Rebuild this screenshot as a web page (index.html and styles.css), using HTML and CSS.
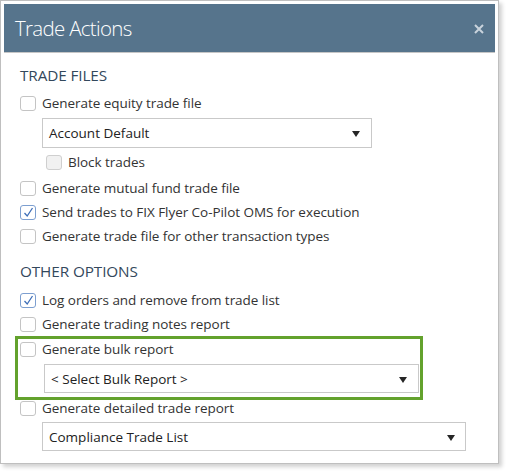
FILE: index.html
```html
<!DOCTYPE html>
<html>
<head>
<meta charset="utf-8">
<link rel="stylesheet" href="styles.css">
</head>
<body>
<div class="dialog">
  <div class="header">
    <span class="title">Trade Actions</span>
    <svg class="close" width="10" height="10" viewBox="0 0 10 10"><path d="M1 1 L9 9 M9 1 L1 9" stroke="#c9d3dc" stroke-width="2" fill="none"/></svg>
  </div>
  <div class="body">
    <div class="heading h1">TRADE FILES</div>
    <label class="row r-equity"><span class="cb"></span>Generate equity trade file</label>
    <div class="select s-account"><span>Account Default</span><i class="arrow"></i></div>
    <label class="row sub r-block"><span class="cb disabled"></span>Block trades</label>
    <label class="row r-mutual"><span class="cb"></span>Generate mutual fund trade file</label>
    <label class="row"><span class="cb checked"><svg width="13" height="13" viewBox="0 0 13 13"><path d="M2.5 7 L5.2 10 L10.5 2" stroke="#3f6fb8" stroke-width="1.3" fill="none"/></svg></span>Send trades to FIX Flyer Co-Pilot OMS for execution</label>
    <label class="row"><span class="cb"></span>Generate trade file for other transaction types</label>

    <div class="heading h2">OTHER OPTIONS</div>
    <label class="row r-log"><span class="cb checked"><svg width="13" height="13" viewBox="0 0 13 13"><path d="M2.5 7 L5.2 10 L10.5 2" stroke="#3f6fb8" stroke-width="1.3" fill="none"/></svg></span>Log orders and remove from trade list</label>
    <label class="row r-notes"><span class="cb"></span>Generate trading notes report</label>
    <div class="highlight">
      <label class="row r-bulk"><span class="cb"></span>Generate bulk report</label>
      <div class="select s-bulk"><span>&lt; Select Bulk Report &gt;</span><i class="arrow"></i></div>
    </div>
    <label class="row r-detail"><span class="cb"></span>Generate detailed trade report</label>
    <div class="select s-compliance"><span>Compliance Trade List</span><i class="arrow"></i></div>
  </div>
</div>
</body>
</html>
```

FILE: styles.css
```css
* { box-sizing: border-box; }
html, body { margin: 0; padding: 0; background: #ffffff; }
body {
  font-family: "Open Sans", "Noto Sans", "Liberation Sans", sans-serif;
  color: #333333;
  width: 508px;
  height: 473px;
  overflow: hidden;
}
.dialog {
  width: 499px;
  height: 464px;
  border: 1px solid #bfbfbf;
  padding: 3px;
  background: #fff;
  box-shadow: 3px 3px 4px rgba(0,0,0,0.18);
}
.header {
  height: 49px;
  background: #56748c;
  border-bottom: 1px solid #c6c6c6;
  display: flex;
  align-items: center;
  justify-content: space-between;
  padding: 0 11px 0 11px;
}
.title {
  color: #ffffff;
  font-size: 20.5px;
  font-weight: 300;
  letter-spacing: -0.7px;
  margin-top: -1px;
}
.close { margin-top: 2px; }
.body {
  padding: 12px 0 0 16px;
  display: flex;
  flex-direction: column;
  align-items: flex-start;
}
.heading {
  font-size: 15.3px;
  line-height: 20px;
  height: 20px;
  color: #33485c;
  letter-spacing: -0.1px;
}
.h2 { margin-top: 13px; }
.row {
  display: flex;
  align-items: center;
  height: 24px;
  font-size: 13.5px;
  letter-spacing: -0.05px;
  color: #333;
}
.r-equity { margin-top: 6px; }
.cb {
  width: 16px;
  height: 15px;
  border: 1px solid #c4c4c4;
  border-radius: 3px;
  background: #fff;
  margin-right: 6px;
  display: flex;
  align-items: center;
  justify-content: center;
  flex: none;
}
.cb.disabled { background: #f1f1f1; border-color: #cfcfcf; }
.cb.checked { border-color: #7d9fd0; }
.sub { padding-left: 26px; margin-top: 2px; }
.r-mutual { margin-top: 2px; }
.r-log { margin-top: 7px; }
.select {
  margin-left: 22px;
  height: 30px;
  border: 1px solid #c9c9c9;
  background: #fff;
  display: flex;
  align-items: center;
  justify-content: space-between;
  padding: 0 11px 0 6px;
  font-size: 13.5px;
  color: #222;
}
.s-account { width: 330px; margin-top: 3px; }
.s-bulk { width: 375px; height: 29px; margin-top: 5px; margin-left: 24px; }
.s-compliance { width: 424px; height: 29px; margin-top: 6px; padding-right: 10px; }
.arrow {
  width: 0;
  height: 0;
  border-left: 4px solid transparent;
  border-right: 4px solid transparent;
  border-top: 6px solid #262626;
  margin-top: 2px;
}
.highlight {
  margin-left: -5px;
  width: 408px;
  height: 64px;
  border: 3px solid #63a22d;
  padding: 0 0 0 2px;
}
.r-bulk { height: 20px; }
.r-detail { height: 16px; }
```
